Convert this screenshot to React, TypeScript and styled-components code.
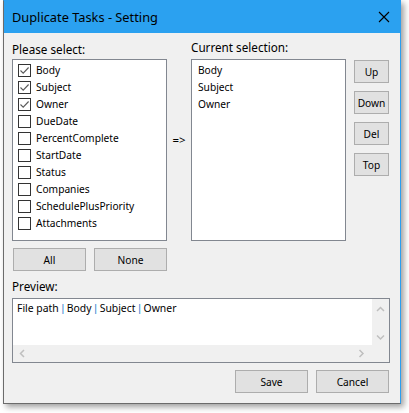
import React from "react";
import styled, { createGlobalStyle } from "styled-components";

const Global = createGlobalStyle`
  html, body { margin: 0; padding: 0; background: #ffffff; }
  body { font-family: "Noto Sans", "Liberation Sans", sans-serif; font-size: 12px; color: #000; }
  * { box-sizing: border-box; }
`;

const SMALL = "10.2px";

const Stage = styled.div`
  width: 409px;
  height: 413px;
  padding: 0 0 0 3px;
`;

const Window = styled.div`
  width: 398px;
  height: 404px;
  display: flex;
  flex-direction: column;
  background: #f0f0f0;
  border: 1px solid #6b6b6b;
  border-top-color: #2ba1f0;
  border-right-color: #2a9ef0;
  box-shadow: 3px 3px 6px rgba(0, 0, 0, 0.38);
`;

const TitleBar = styled.div`
  height: 32px;
  flex: none;
  display: flex;
  align-items: center;
  justify-content: space-between;
  background: #2ba1f0;
  padding: 0 10px 0 8px;
`;

const Title = styled.span`
  font-size: 12.8px;
  line-height: 16px;
  color: #000;
`;

const CloseIcon = () => (
  <svg width="12" height="12" viewBox="0 0 12 12">
    <path d="M1 1 L11 11 M11 1 L1 11" stroke="#000" strokeWidth="1.1" fill="none" />
  </svg>
);

const Body = styled.div`
  flex: 1;
  display: flex;
  flex-direction: column;
  padding: 8px 0 0 8px;
`;

const TopRow = styled.div`
  display: flex;
  align-items: flex-start;
`;

const Column = styled.div`
  width: 155px;
  display: flex;
  flex-direction: column;
`;

const Label = styled.div<{ $lift?: number }>`
  font-size: 11.7px;
  line-height: 16px;
  height: 16px;
  margin-top: ${(p) => -(p.$lift ?? 0)}px;
  margin-bottom: ${(p) => 2 + (p.$lift ?? 0)}px;
  white-space: nowrap;
`;

const ListBox = styled.div<{ $pad: number }>`
  height: 182px;
  background: #ffffff;
  border: 1px solid #828790;
  padding: 2px 0 0 ${(p) => p.$pad}px;
  display: flex;
  flex-direction: column;
`;

const Row = styled.div`
  height: 17px;
  display: flex;
  align-items: center;
  gap: 5px;
  white-space: nowrap;
  line-height: 17px;
  font-size: ${SMALL};
`;

const Box = styled.span`
  width: 13px;
  height: 13px;
  flex: none;
  border: 1px solid #333333;
  background: #ffffff;
  display: flex;
  align-items: center;
  justify-content: center;
`;

const Check = () => (
  <svg width="11" height="11" viewBox="0 0 11 11">
    <path d="M1.5 5.5 L4.2 8.2 L9.6 2.5" stroke="#5a5a5a" strokeWidth="1.1" fill="none" />
  </svg>
);

const Arrow = styled.div`
  width: 24px;
  padding-top: 91px;
  text-align: center;
  line-height: 16px;
  font-size: 11.5px;
`;

const SideButtons = styled.div`
  margin-left: 8px;
  padding-top: 19px;
  display: flex;
  flex-direction: column;
  gap: 8px;
`;

const Button = styled.button<{ $w: number }>`
  width: ${(p) => p.$w}px;
  height: 23px;
  padding: 0;
  background: #e1e1e1;
  border: 1px solid #adadad;
  font-family: inherit;
  font-size: ${SMALL};
  color: #000;
  line-height: 16px;
`;

const PairRow = styled.div`
  display: flex;
  gap: 8px;
  padding-left: 1px;
  margin-top: 7px;
`;

const PreviewLabel = styled.div`
  font-size: 11.7px;
  line-height: 16px;
  margin-top: 7px;
  margin-bottom: 4px;
`;

const Preview = styled.div`
  width: 378px;
  height: 65px;
  border: 1px solid #828790;
  display: grid;
  grid-template-columns: 1fr 17px;
  grid-template-rows: 1fr 17px;
`;

const PreviewText = styled.div`
  background: #ffffff;
  padding: 1px 0 0 4px;
  line-height: 16px;
  font-size: 10.4px;
  white-space: pre;
`;

const Sep = styled.span`
  font-family: "Liberation Sans", sans-serif;
  color: #2f7fd0;
`;

const VScroll = styled.div`
  background: #f0f0f0;
  display: flex;
  flex-direction: column;
  justify-content: space-between;
  align-items: center;
  padding: 7px 0 4px;
`;

const HScroll = styled.div`
  background: #f0f0f0;
  display: flex;
  justify-content: space-between;
  align-items: center;
  padding: 0 7px 0 6px;
`;

const Corner = styled.div`
  background: #f0f0f0;
`;

const Chevron = ({ dir }: { dir: "up" | "down" | "left" | "right" }) => {
  const d = {
    up: "M1 5 L4.5 1.5 L8 5",
    down: "M1 1.5 L4.5 5 L8 1.5",
    left: "M5 1 L1.5 4.5 L5 8",
    right: "M1.5 1 L5 4.5 L1.5 8",
  }[dir];
  const w = dir === "up" || dir === "down" ? 9 : 7;
  const h = dir === "up" || dir === "down" ? 7 : 9;
  return (
    <svg width={w} height={h} viewBox={`0 0 ${w} ${h}`}>
      <path d={d} stroke="#bfbfbf" strokeWidth="1.5" fill="none" />
    </svg>
  );
};

const Footer = styled.div`
  display: flex;
  justify-content: flex-end;
  gap: 8px;
  width: 377px;
  margin-top: 7px;
`;

const fields = [
  { name: "Body", on: true },
  { name: "Subject", on: true },
  { name: "Owner", on: true },
  { name: "DueDate", on: false },
  { name: "PercentComplete", on: false },
  { name: "StartDate", on: false },
  { name: "Status", on: false },
  { name: "Companies", on: false },
  { name: "SchedulePlusPriority", on: false },
  { name: "Attachments", on: false },
];

export default function App() {
  const chosen = fields.filter((f) => f.on).map((f) => f.name);
  const parts = ["File path", ...chosen];
  return (
    <Stage>
      <Global />
      <Window>
        <TitleBar>
          <Title>Duplicate Tasks - Setting</Title>
          <CloseIcon />
        </TitleBar>
        <Body>
          <TopRow>
            <Column>
              <Label>Please select:</Label>
              <ListBox $pad={5}>
                {fields.map((f) => (
                  <Row key={f.name}>
                    <Box>{f.on && <Check />}</Box>
                    {f.name}
                  </Row>
                ))}
              </ListBox>
              <PairRow>
                <Button $w={73}>All</Button>
                <Button $w={73}>None</Button>
              </PairRow>
            </Column>
            <Arrow>=&gt;</Arrow>
            <Column>
              <Label $lift={2}>Current selection:</Label>
              <ListBox $pad={6}>
                {chosen.map((n) => (
                  <Row key={n}>{n}</Row>
                ))}
              </ListBox>
            </Column>
            <SideButtons>
              <Button $w={35}>Up</Button>
              <Button $w={35}>Down</Button>
              <Button $w={35}>Del</Button>
              <Button $w={35}>Top</Button>
            </SideButtons>
          </TopRow>
          <PreviewLabel>Preview:</PreviewLabel>
          <Preview>
            <PreviewText>
              {parts.map((p, i) => (
                <React.Fragment key={p}>
                  {i > 0 && (
                    <>
                      {" "}
                      <Sep>|</Sep>{" "}
                    </>
                  )}
                  {p}
                </React.Fragment>
              ))}
            </PreviewText>
            <VScroll>
              <Chevron dir="up" />
              <Chevron dir="down" />
            </VScroll>
            <HScroll>
              <Chevron dir="left" />
              <Chevron dir="right" />
            </HScroll>
            <Corner />
          </Preview>
          <Footer>
            <Button $w={73}>Save</Button>
            <Button $w={73}>Cancel</Button>
          </Footer>
        </Body>
      </Window>
    </Stage>
  );
}
